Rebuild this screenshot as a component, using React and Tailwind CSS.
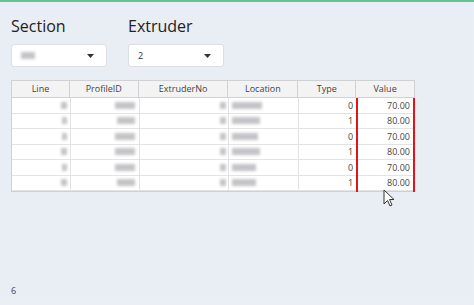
import React from "react";

const rows = [
  { line: 6, pid: 20, ext: 6, loc: 30, type: 0, value: "70.00" },
  { line: 5, pid: 18, ext: 6, loc: 28, type: 1, value: "80.00" },
  { line: 5, pid: 20, ext: 6, loc: 26, type: 0, value: "70.00" },
  { line: 6, pid: 20, ext: 6, loc: 28, type: 1, value: "80.00" },
  { line: 5, pid: 20, ext: 6, loc: 24, type: 0, value: "70.00" },
  { line: 6, pid: 18, ext: 6, loc: 24, type: 1, value: "80.00" },
];

const cols = [
  { name: "Line", w: "w-[58px]" },
  { name: "ProfileID", w: "w-[69px]" },
  { name: "ExtruderNo", w: "w-[90px]" },
  { name: "Location", w: "w-[70px]" },
  { name: "Type", w: "w-[58px]" },
  { name: "Value", w: "w-[58px]" },
];

const Blur = ({ w }) => (
  <span className="inline-block h-[7px] bg-[#c4c4c8] blur-[1.5px]" style={{ width: w }} />
);

const Caret = () => (
  <svg width="7" height="4" viewBox="0 0 7 4"><path d="M0 0h7L3.5 4z" fill="#333" /></svg>
);

const Select = ({ children }) => (
  <div className="flex h-[23px] w-[96px] items-center justify-between rounded-[3px] border border-[#dcdfe4] bg-white pl-[9px] pr-[12px] text-[9px] text-[#333]">
    <span>{children}</span>
    <Caret />
  </div>
);

export default function App() {
  return (
    <div className="relative h-[305px] w-[474px] overflow-hidden bg-[#ebeef4] font-['Open_Sans',sans-serif]">
      <div className="h-[2px] bg-[#5fc595]" />
      <div className="h-[301px] w-[472px] bg-[#e9edf4] px-[11px] pt-[12px]">
        <div className="flex gap-[21px]">
          <div>
            <div className="mb-[6px] text-[16px] leading-[24px] text-[#222]">Section</div>
            <Select><Blur w={14} /></Select>
          </div>
          <div>
            <div className="mb-[6px] text-[16px] leading-[24px] text-[#222]">Extruder</div>
            <Select>2</Select>
          </div>
        </div>

        <div className="mt-[13px] w-[404px] border border-[#cfd1d4] bg-white text-[9px] text-[#444]">
          <div className="flex h-[17px] bg-[#f3f3f3]">
            {cols.map((c, i) => (
              <div
                key={c.name}
                className={`${c.w} flex items-center justify-center border-b border-[#cfd1d4] ${i < 5 ? "border-r" : ""}`}
              >
                {c.name}
              </div>
            ))}
          </div>
          <div className="relative">
            {rows.map((r, i) => (
              <div key={i} className="flex h-[15.5px]">
                <div className="flex w-[58px] items-center justify-end border-b border-[#e3e3e3] pr-[3px]"><Blur w={r.line} /></div>
                <div className="flex w-[69px] items-center justify-end border-b border-l border-[#e3e3e3] pr-[4px]"><Blur w={r.pid} /></div>
                <div className="flex w-[90px] items-center justify-end border-b border-l border-[#e3e3e3] pr-[2px]"><Blur w={r.ext} /></div>
                <div className="flex w-[70px] items-center border-b border-l border-[#e3e3e3] pl-[3px]"><Blur w={r.loc} /></div>
                <div className="flex w-[58px] items-center justify-end border-b border-l border-[#e3e3e3] pr-[3px]">{r.type}</div>
                <div className="flex w-[58px] items-center justify-end border-b border-[#e3e3e3] pr-[4px]">{r.value}</div>
              </div>
            ))}
            <div className="pointer-events-none absolute right-[-1px] top-0 bottom-[-1px] w-[59px] border-x-2 border-[#e0141a]" />
          </div>
        </div>

        <div className="mt-[92px] text-[9px] text-[#444]">6</div>
      </div>

      <svg className="absolute left-[383px] top-[189px]" width="12" height="18" viewBox="0 0 12 18">
        <path d="M1 1v14l3.5-3.5 2.5 5.5 2-1-2.5-5.5H11z" fill="#fff" stroke="#333" strokeWidth="1" strokeLinejoin="round" />
      </svg>
    </div>
  );
}
